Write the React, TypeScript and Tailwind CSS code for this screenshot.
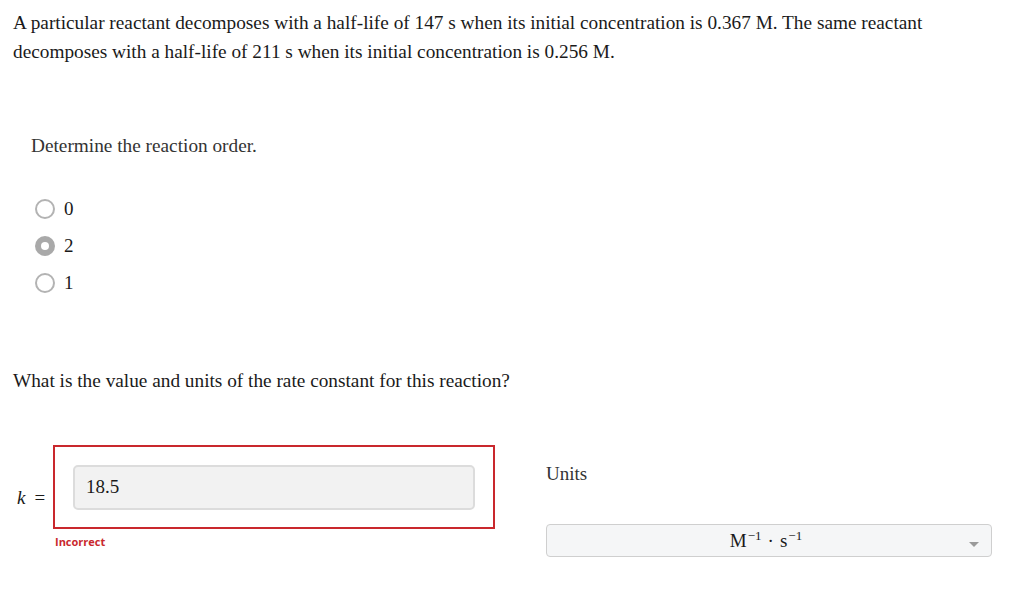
import { useState } from 'react'

const serif = { fontFamily: '"Liberation Serif", "Times New Roman", serif' }

function Radio({ checked }: { checked: boolean }) {
  if (checked) {
    return (
      <span className="flex h-[20px] w-[20px] items-center justify-center rounded-full bg-[#a9a9a9]">
        <span className="h-[8px] w-[8px] rounded-full bg-white" />
      </span>
    )
  }
  return <span className="block h-[20px] w-[20px] rounded-full border-2 border-[#b3b3b3] bg-white" />
}

export default function App() {
  const [order, setOrder] = useState('2')
  const options = ['0', '2', '1']

  return (
    <div className="min-h-[597px] w-[1024px] bg-white text-[#1a1a1a]" style={serif}>
      {/* problem statement */}
      <p className="w-[960px] px-[13px] pt-[8px] text-[19.3px] leading-[29px]">
        A particular reactant decomposes with a half-life of 147&nbsp;s when its initial concentration is 0.367&nbsp;M. The same reactant decomposes with a half-life of 211&nbsp;s when its initial concentration is 0.256&nbsp;M.
      </p>

      {/* part 1 */}
      <div className="mt-[68px] pl-[31px]">
        <p className="text-[19.3px] leading-[24px] text-[#333]">Determine the reaction order.</p>
        <div className="mt-[40px] flex flex-col gap-[16px] pl-[4px]">
          {options.map(o => (
            <label key={o} className="flex cursor-pointer items-center gap-[9px] text-[19px] leading-[21px]" onClick={() => setOrder(o)}>
              <Radio checked={order === o} />
              <span>{o}</span>
            </label>
          ))}
        </div>
      </div>

      {/* part 2 */}
      <p className="mt-[76px] px-[13px] text-[19.3px] leading-[24px]">What is the value and units of the rate constant for this reaction?</p>

      <div className="mt-[52px] flex items-start">
        <div className="flex items-start">
          <span className="mt-[42px] flex w-[53px] gap-[9px] pl-[17px] text-[19px] leading-[22px]">
            <i>k</i>
            <span>=</span>
          </span>
          <div className="flex flex-col">
            <div className="h-[84px] w-[442px] border-2 border-[#c9282d] px-[18px] pt-[18px]">
              <div className="flex h-[45px] items-center rounded-[5px] border-2 border-[#dcdcdc] bg-[#f2f2f2] px-[11px] text-[19px]">
                18.5
              </div>
            </div>
            <span
              className="mt-[6px] pl-[2px] text-[11px] font-bold leading-[14px] text-[#c9282d]"
              style={{ fontFamily: '"Open Sans", "Liberation Sans", sans-serif' }}
            >
              Incorrect
            </span>
          </div>
        </div>

        <div className="ml-[51px] flex flex-col">
          <span className="mt-[18px] text-[19px] leading-[22px] text-[#333]">Units</span>
          <div className="relative mt-[39px] flex h-[33px] w-[446px] items-center justify-center rounded-[4px] border border-[#cfcfcf] bg-[#f5f6f7] text-[19px]">
            <span className="pr-[6px] leading-[20px]">
              M<sup className="relative top-[-7px] ml-[1px] text-[13px]">−1</sup>
              <span className="mx-[6px]">·</span>
              s<sup className="relative top-[-7px] ml-[1px] text-[13px]">−1</sup>
            </span>
            <span className="absolute right-[12px] top-[17px] h-0 w-0 border-x-[5px] border-t-[5px] border-x-transparent border-t-[#9a9a9a]" />
          </div>
        </div>
      </div>
    </div>
  )
}
